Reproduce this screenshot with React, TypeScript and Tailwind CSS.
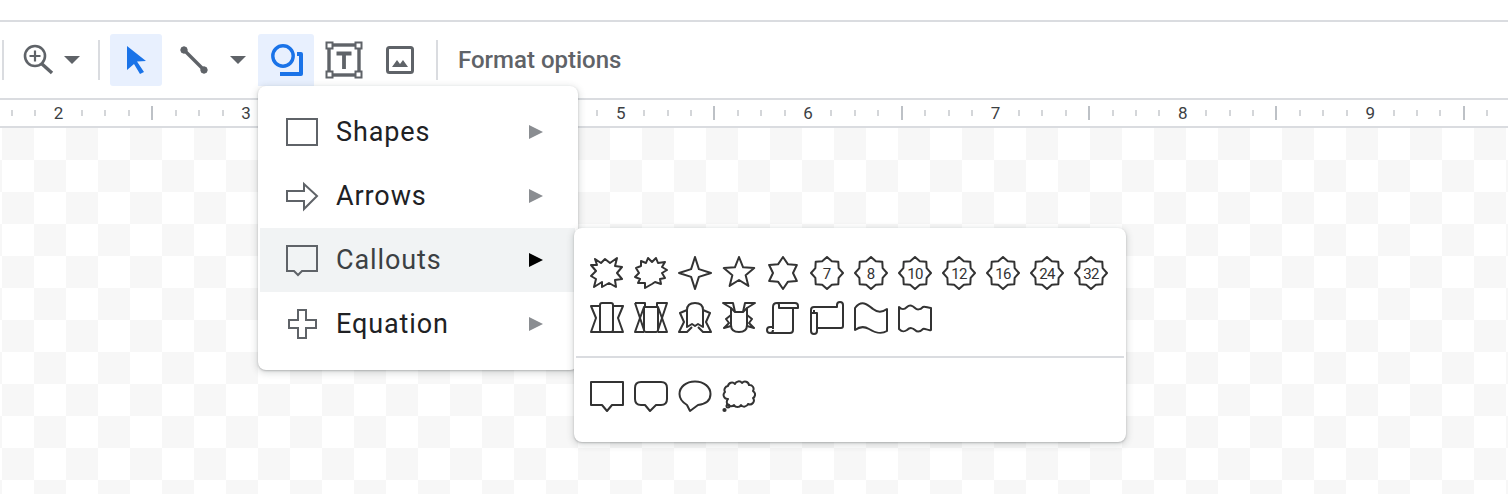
import React from 'react';

const FONT = "font-['Roboto','Liberation_Sans',sans-serif]";

// polygon points for an n-pointed star inside a 34x34 box
const starPoints = (n: number, outer: number, inner: number) => {
  const pts: string[] = [];
  for (let i = 0; i < n * 2; i++) {
    const r = i % 2 === 0 ? outer : inner;
    const a = (Math.PI * i) / n - Math.PI / 2;
    pts.push(`${(17 + r * Math.cos(a)).toFixed(2)},${(17 + r * Math.sin(a)).toFixed(2)}`);
  }
  return pts.join(' ');
};

function Glyph({ children }: { children: React.ReactNode }) {
  return (
    <div className="w-[44px] h-[45px] flex items-center justify-center">
      <svg width="34" height="34" viewBox="0 0 34 34" fill="none" stroke="#333" strokeWidth="2" strokeLinejoin="round">
        {children}
      </svg>
    </div>
  );
}

function BadgeStar({ label }: { label: string }) {
  return (
    <Glyph>
      <polygon points={starPoints(8, 16, 12.6)} />
      <text x="17" y="22.5" textAnchor="middle" fontSize="15" letterSpacing={label.length > 1 ? -0.6 : 0} fill="#333" stroke="none" fontFamily="Roboto, sans-serif">
        {label}
      </text>
    </Glyph>
  );
}

const TOP_ROW = [
  <Glyph key="burst1"><polygon points="5,3 11,7 15,3 20,7 27,2 25,10 32,11 27,17 32,23 25,24 26,31 19,27 12,31 12,26 4,31 6,23 1,20 6,15 1,9 7,9" /></Glyph>,
  <Glyph key="burst2"><polygon points="7,5 12,7 14,2 18,6 22,2 24,7 31,6 28,11 33,14 28,17 31,22 26,23 27,28 21,26 18,28 11,32 11,27 4,27 6,23 1,21 5,17 2,12 7,10" /></Glyph>,
  <Glyph key="star4"><polygon points={starPoints(4, 16, 5.5)} /></Glyph>,
  <Glyph key="star5"><polygon points={starPoints(5, 16, 7)} /></Glyph>,
  <Glyph key="star6"><polygon points={starPoints(6, 16, 10)} /></Glyph>,
  <BadgeStar key="7" label="7" />,
  <BadgeStar key="8" label="8" />,
  <BadgeStar key="10" label="10" />,
  <BadgeStar key="12" label="12" />,
  <BadgeStar key="16" label="16" />,
  <BadgeStar key="24" label="24" />,
  <BadgeStar key="32" label="32" />,
];

const SECOND_ROW = [
  <Glyph key="ribbon1">
    <path d="M10 5V4Q10 2 12 2H21Q23 2 23 4V29Q23 31 21 31H12Q10 31 10 29Z" />
    <path d="M10 5H1L6 17L1 31H33L28 17L33 5H23" />
  </Glyph>,
  <Glyph key="ribbon2">
    <path d="M10 6H24V29Q24 31 22 31H12Q10 31 10 29Z" />
    <path d="M10 6L6 17L10 29M24 6L28 17L24 29M1 2H11V6M23 6V2H33L28 17L33 31H24M1 2L6 17L1 31H10" />
  </Glyph>,
  <Glyph key="ribbon3">
    <path d="M9 26V9Q9 2 17 2Q25 2 25 9V26L20 23L17 25L14 23Z" />
    <path d="M9 9L2 12L6 21L1 31H9L14 26M25 9L32 12L28 21L33 31H25L20 26" />
  </Glyph>,
  <Glyph key="ribbon4">
    <path d="M9 7V24Q9 31 17 31Q25 31 25 24V7L21 11H13Z" />
    <path d="M9 7L1 2H11L13 11M25 7L33 2H23L21 11M9 14L4 18L7 22L2 27L9 25M25 14L30 18L27 22L32 27L25 25" />
  </Glyph>,
  <Glyph key="scroll1">
    <path d="M7 28V6Q7 2 11 2H29Q32 2 32 5V7H13V4Q13 2 11 2" />
    <path d="M27 7V29Q27 32 24 32H4Q1 32 1 29Q1 26 4 26H7M7 29Q7 32 4 32" />
  </Glyph>,
  <Glyph key="scroll2">
    <path d="M1 9Q1 6 4 6H27V4Q27 1 30 1Q33 1 33 4V25Q33 27 31 27H7V30Q7 33 4 33Q1 33 1 30Z" />
    <path d="M4 12H7V27M1 12H4V9" />
  </Glyph>,
  <Glyph key="wave1"><path d="M1 7C8 -2 14 4 19 8C24 12 29 11 33 8V30C26 34 20 31 15 28C10 25 5 26 1 29Z" /></Glyph>,
  <Glyph key="wave2"><path d="M1 6C4 9 6 9 9 6C12 3 15 5 17 7C19 9 22 9 25 6C27 5 30 7 33 7V29C30 30 27 27 25 28C22 31 19 31 17 29C15 27 12 26 9 29C6 31 4 31 1 28Z" /></Glyph>,
];

const CALLOUTS = [
  <Glyph key="rect"><path d="M1 3H33V26H22L17 32L12 26H1Z" /></Glyph>,
  <Glyph key="round"><path d="M7 3H27Q33 3 33 9V20Q33 26 27 26H22L16 32L11 26H7Q1 26 1 20V9Q1 3 7 3Z" /></Glyph>,
  <Glyph key="oval"><path d="M9 26C4 23 1.5 20 1.5 15C1.5 8 8 2.5 17 2.5C26 2.5 32.5 8 32.5 15C32.5 21 28 25 20 26L12 32Z" /></Glyph>,
  <Glyph key="cloud">
    <path d="M6 20A4 4 0 0 1 3 13A4 4 0 0 1 6 7A4 4 0 0 1 13 5A4 4 0 0 1 20 4A4 4 0 0 1 27 6A4 4 0 0 1 31 12A4 4 0 0 1 31 19A4 4 0 0 1 26 25A4 4 0 0 1 19 26A4 4 0 0 1 12 26A4 4 0 0 1 6 20Z" />
    <circle cx="6" cy="27" r="1.5" />
    <circle cx="2.5" cy="31" r="1.1" />
  </Glyph>,
];

const Caret = ({ className }: { className: string }) => (
  <div className={`flex items-center justify-center ${className}`}>
    <div className="w-0 h-0 border-x-[8px] border-x-transparent border-t-[8px] border-t-[#5f6368]" />
  </div>
);

const Separator = ({ className }: { className: string }) => <div className={`w-[2px] h-[40px] bg-[#dadce0] ${className}`} />;

function MenuRow({ icon, label, active }: { icon: React.ReactNode; label: string; active?: boolean }) {
  return (
    <div className={`h-[64px] flex items-center pl-[26px] ${active ? 'bg-[#f1f3f4] text-[#3c4043]' : 'text-[#202124]'}`}>
      <svg width="36" height="36" viewBox="0 0 36 36" fill="none" stroke="#5f6368" strokeWidth="2" className="-ml-[2px]">
        {icon}
      </svg>
      <span className="ml-[16px] text-[27px] leading-none tracking-[0.9px]">{label}</span>
      <div className={`ml-auto mr-[32px] w-0 h-0 border-y-[7px] border-y-transparent border-l-[14px] ${active ? 'border-l-black' : 'border-l-[#8a8d91]'}`} />
    </div>
  );
}

// ruler: 8 divisions per unit, label sits on every 8th cell
function Ruler() {
  const cells = Array.from({ length: 66 }, (_, i) => i);
  return (
    <div className="h-[30px] shrink-0 border-y-2 border-[#dadce0] flex items-center overflow-hidden">
      {cells.map((i) => {
        const unit = i % 8 === 2 ? 2 + (i - 2) / 8 : null;
        return (
          <div key={i} className="w-[23.43px] shrink-0 flex justify-center">
            {unit !== null ? (
              <span className="text-[17px] leading-none text-[#3c4043]">{unit}</span>
            ) : i % 8 === 6 ? (
              <div className="w-[2px] h-[14px] bg-[#bdc1c6]" />
            ) : (
              <div className="w-[2px] h-[6px] bg-[#d4d6d9]" />
            )}
          </div>
        );
      })}
    </div>
  );
}

export default function App() {
  return (
    <div className={`relative w-[1508px] h-[494px] overflow-hidden bg-white flex flex-col ${FONT}`}>
      <div className="h-[20px] shrink-0 border-b-2 border-[#dadce0] box-content" />

      {/* toolbar */}
      <div className="h-[76px] shrink-0 flex items-center">
        <Separator className="ml-[2px]" />
        <svg width="36" height="36" viewBox="0 0 36 36" fill="none" stroke="#5f6368" className="ml-[16px]">
          <circle cx="15" cy="14" r="10" strokeWidth="2.6" />
          <path d="M22 22L32 31" strokeWidth="3.4" />
          <path d="M15 8.5V19.5M9.5 14H20.5" strokeWidth="2.2" />
        </svg>
        <Caret className="w-[32px]" />
        <Separator className="ml-[10px]" />
        <div className="ml-[10px] w-[52px] h-[52px] rounded-[3px] bg-[#e8f0fe] flex items-center justify-center">
          <svg width="24" height="32" viewBox="0 0 24 32">
            <polygon points="3,2 22,17 13,17.5 20,28 16,30 10,20 3,26" fill="#1a73e8" />
          </svg>
        </div>
        <div className="w-[64px] flex justify-center">
          <svg width="32" height="32" viewBox="0 0 32 32" stroke="#5f6368" fill="#5f6368">
            <path d="M6 6L26 26" strokeWidth="3.4" />
            <circle cx="6" cy="6" r="3.2" />
            <circle cx="26" cy="26" r="3.2" />
          </svg>
        </div>
        <Caret className="w-[24px]" />
        <div className="ml-[8px] w-[56px] h-[52px] rounded-t-[3px] bg-[#e8f0fe] flex items-center justify-center">
          <svg width="36" height="36" viewBox="0 0 36 36" fill="none" stroke="#1a73e8">
            <circle cx="15" cy="14" r="10.2" strokeWidth="3.4" />
            <path d="M29 12H33V32H12" strokeWidth="4" strokeLinejoin="round" />
          </svg>
        </div>
        <div className="w-[60px] flex justify-center">
          <svg width="38" height="38" viewBox="0 0 38 38" fill="none" stroke="#5f6368">
            <rect x="4" y="4" width="30" height="30" strokeWidth="3.4" />
            <g fill="#fff" strokeWidth="2">
              <rect x="1.5" y="1.5" width="6" height="6" />
              <rect x="30.5" y="1.5" width="6" height="6" />
              <rect x="1.5" y="30.5" width="6" height="6" />
              <rect x="30.5" y="30.5" width="6" height="6" />
            </g>
            <path d="M11.5 12.5H26.5M19 12.5V28" strokeWidth="3.8" />
          </svg>
        </div>
        <div className="w-[52px] flex justify-center">
          <svg width="30" height="30" viewBox="0 0 30 30" fill="none">
            <rect x="2.5" y="2.5" width="25" height="25" rx="2" stroke="#5f6368" strokeWidth="3" />
            <polygon points="7,22 12,15 15,19 18,15 23,22" fill="#5f6368" />
          </svg>
        </div>
        <Separator className="ml-[10px]" />
        <span className="ml-[20px] text-[24px] font-medium leading-none text-[#5f6368]">Format options</span>
      </div>

      <Ruler />

      {/* checkerboard canvas */}
      <div className="flex-1 bg-[repeating-conic-gradient(#f7f7f7_0_25%,#ffffff_0_50%)] bg-[length:64px_64px] bg-[position:-30px_0]" />

      {/* insert shape menu */}
      <div className="absolute left-[258px] top-[86px] w-[320px] h-[284px] py-[14px] pr-[3px] pl-[2px] bg-white rounded-[8px] shadow-[0_2px_6px_2px_rgba(60,64,67,0.15),0_1px_2px_rgba(60,64,67,0.3)]">
        <MenuRow label="Shapes" icon={<rect x="3" y="5" width="30" height="26" />} />
        <MenuRow label="Arrows" icon={<path d="M3 13H20V6L33 18L20 31V23H3Z" />} />
        <MenuRow label="Callouts" active icon={<path d="M3 4H33V29H18L14 33L10 29H3Z" />} />
        <MenuRow label="Equation" icon={<path d="M14 4H22V14H32V22H22V32H14V22H5V14H14Z" />} />
      </div>

      {/* callouts submenu */}
      <div className="absolute left-[574px] top-[228px] w-[552px] h-[214px] pt-[22px] bg-white rounded-[8px] shadow-[0_2px_6px_2px_rgba(60,64,67,0.15),0_1px_2px_rgba(60,64,67,0.3)]">
        <div className="flex pl-[11px]">{TOP_ROW}</div>
        <div className="flex pl-[11px]">{SECOND_ROW}</div>
        <div className="mx-[2px] mt-[16px] h-[2px] bg-[#dadce0]" />
        <div className="flex pl-[11px] mt-[15px]">{CALLOUTS}</div>
      </div>
    </div>
  );
}
